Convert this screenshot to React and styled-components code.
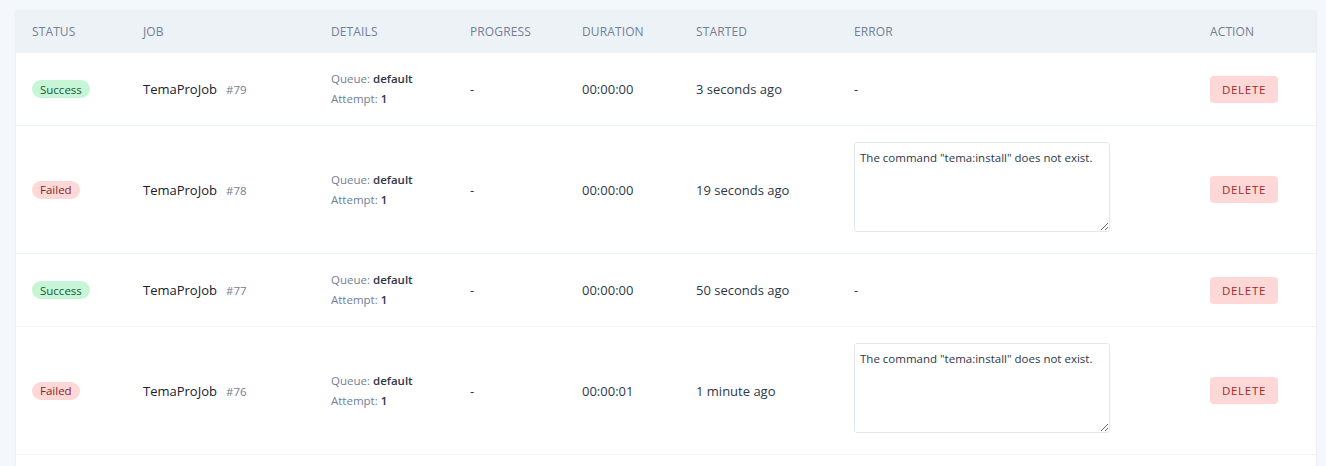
import React from "react";
import styled, { createGlobalStyle } from "styled-components";

const Global = createGlobalStyle`
  html, body { margin: 0; padding: 0; background: #f4f7fb; }
  body { font-family: "Segoe UI", "Open Sans", "Noto Sans", sans-serif; color: #2d3748; }
  * { box-sizing: border-box; }
`;

const Page = styled.div`
  padding: 10px 10px 0 16px;
  height: 466px;
  overflow: hidden;
`;

const Card = styled.div`
  width: 1300px;
  min-height: 480px;
  background: #fff;
  box-shadow: 0 1px 3px rgba(0, 0, 0, 0.06), 0 1px 2px rgba(0, 0, 0, 0.04);
`;

const Table = styled.table`
  width: 100%;
  border-collapse: collapse;
  table-layout: fixed;
`;

const Th = styled.th`
  height: 43px;
  padding: 0 16px;
  background: #edf2f7;
  color: #718096;
  font-size: 12px;
  font-weight: 400;
  text-transform: uppercase;
  text-align: left;
  letter-spacing: 0.01em;
`;

const Tr = styled.tr`
  border-bottom: 1px solid #edf2f7;
`;

const Td = styled.td`
  padding: 16px;
  vertical-align: middle;
  font-size: 13px;
  color: #2d3748;
`;

const Badge = styled.span`
  display: inline-flex;
  align-items: center;
  height: 18px;
  padding: 0 8px;
  border-radius: 9999px;
  font-size: 11.5px;
  background: ${(p) => (p.$ok ? "#c6f6d5" : "#fed7d7")};
  color: ${(p) => (p.$ok ? "#22543d" : "#822727")};
`;

const JobName = styled.span`
  font-size: 13px;
  font-weight: 500;
  color: #1a202c;
`;

const JobId = styled.span`
  margin-left: 9px;
  font-size: 11.5px;
  color: #718096;
`;

const Details = styled.div`
  font-size: 11.5px;
  line-height: 20px;
  color: #718096;
  b { font-weight: 600; color: #2d3748; }
`;

const ErrorBox = styled.textarea`
  display: block;
  width: 256px;
  height: 90px;
  margin: 0 0 5px;
  padding: 7px 5px;
  border: 1px solid #e2e8f0;
  border-radius: 3px;
  font-family: inherit;
  font-size: 11.5px;
  color: #2d3748;
  background: #fff;
  resize: both;
  outline: none;
`;

const DeleteButton = styled.button`
  height: 27px;
  padding: 0 12px;
  border: 0;
  border-radius: 4px;
  background: #fed7d7;
  color: #9b2c2c;
  font-family: inherit;
  font-size: 11.5px;
  letter-spacing: 0.06em;
  text-transform: uppercase;
  cursor: pointer;
`;

const cols = [111, 188, 139, 112, 114, 158, 356, 122];
const heads = ["Status", "Job", "Details", "Progress", "Duration", "Started", "Error", "Action"];

const jobs = [
  { ok: true, id: 79, dur: "00:00:00", started: "3 seconds ago" },
  { ok: false, id: 78, dur: "00:00:00", started: "19 seconds ago" },
  { ok: true, id: 77, dur: "00:00:00", started: "50 seconds ago" },
  { ok: false, id: 76, dur: "00:00:01", started: "1 minute ago" },
];

export default function App() {
  return (
    <Page>
      <Global />
      <Card>
        <Table>
          <colgroup>
            {cols.map((w, i) => (
              <col key={i} style={{ width: w }} />
            ))}
          </colgroup>
          <thead>
            <tr>
              {heads.map((h) => (
                <Th key={h}>{h}</Th>
              ))}
            </tr>
          </thead>
          <tbody>
            {jobs.map((j) => (
              <Tr key={j.id}>
                <Td>
                  <Badge $ok={j.ok}>{j.ok ? "Success" : "Failed"}</Badge>
                </Td>
                <Td>
                  <JobName>TemaProJob</JobName>
                  <JobId>#{j.id}</JobId>
                </Td>
                <Td>
                  <Details>
                    <div>
                      Queue: <b>default</b>
                    </div>
                    <div>
                      Attempt: <b>1</b>
                    </div>
                  </Details>
                </Td>
                <Td>-</Td>
                <Td>{j.dur}</Td>
                <Td>{j.started}</Td>
                <Td>
                  {j.ok ? (
                    "-"
                  ) : (
                    <ErrorBox readOnly defaultValue={'The command "tema:install" does not exist.'} />
                  )}
                </Td>
                <Td>
                  <DeleteButton>Delete</DeleteButton>
                </Td>
              </Tr>
            ))}
          </tbody>
        </Table>
      </Card>
    </Page>
  );
}
